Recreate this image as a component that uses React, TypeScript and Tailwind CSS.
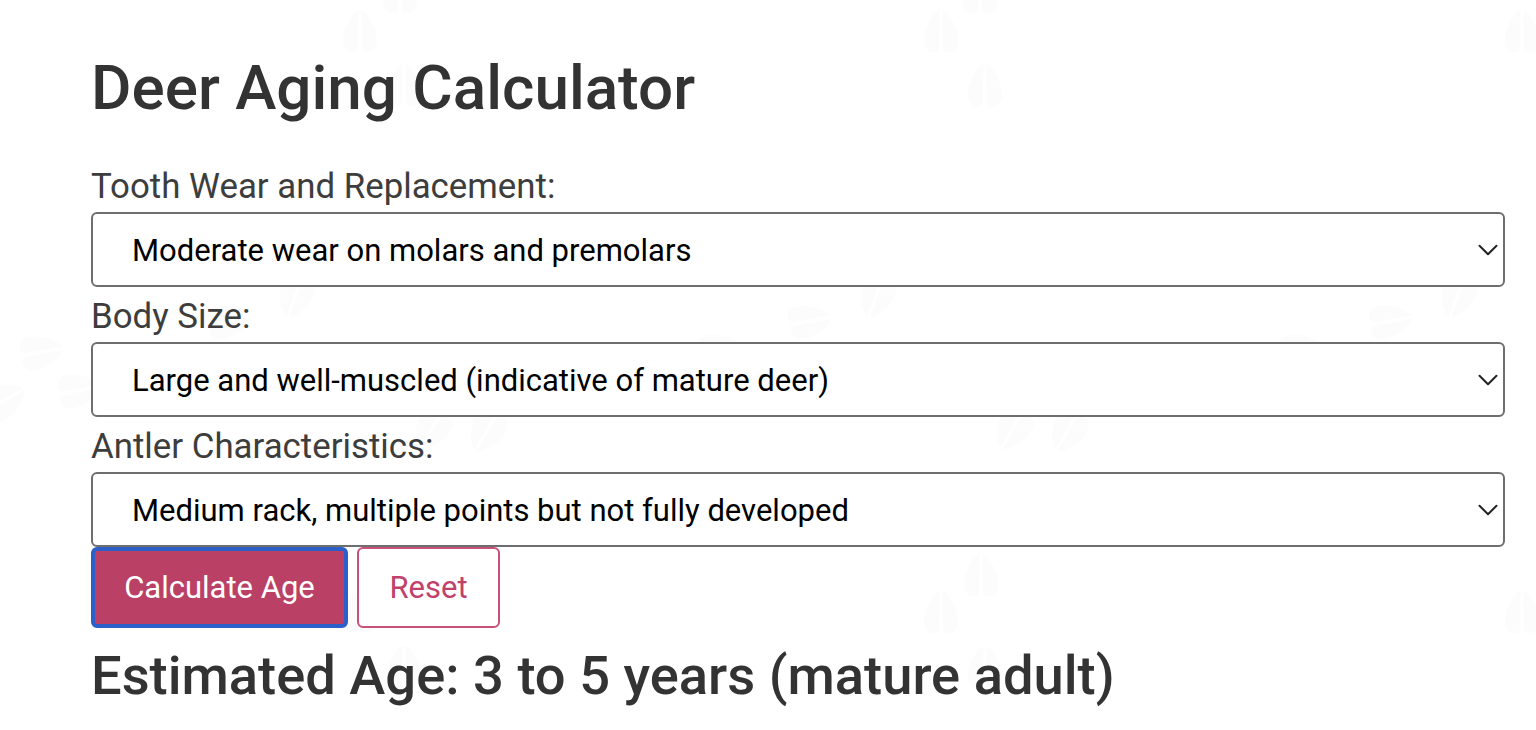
import { ChevronDown } from "lucide-react";

const hoofPrints = [
  { x: 941, y: 31, r: 0 },
  { x: 985, y: 85, r: 0 },
  { x: 980, y: -8, r: 0 },
  { x: 1522, y: 31, r: 0 },
  { x: 400, y: -8, r: 0 },
  { x: 360, y: 31, r: 0 },
  { x: 404, y: 85, r: 0 },
  { x: 941, y: 612, r: 0 },
  { x: 981, y: 575, r: 0 },
  { x: 985, y: 667, r: 0 },
  { x: 1522, y: 612, r: 0 },
  { x: 360, y: 612, r: 0 },
  { x: 400, y: 575, r: 0 },
  { x: 404, y: 667, r: 0 },
  { x: 42, y: 352, r: 80 },
  { x: 80, y: 390, r: 80 },
  { x: 5, y: 400, r: 60 },
  { x: 810, y: 321, r: 80 },
  { x: 720, y: 350, r: 80 },
  { x: 1391, y: 321, r: 80 },
  { x: 1301, y: 350, r: 80 },
  { x: 229, y: 321, r: 80 },
  { x: 876, y: 297, r: 200 },
  { x: 1457, y: 297, r: 200 },
  { x: 295, y: 297, r: 200 },
  { x: 1012, y: 430, r: 210 },
  { x: 1067, y: 432, r: 210 },
  { x: 431, y: 430, r: 210 },
  { x: 486, y: 432, r: 210 },
];

const fields = [
  { label: "Tooth Wear and Replacement:", value: "Moderate wear on molars and premolars" },
  { label: "Body Size:", value: "Large and well-muscled (indicative of mature deer)" },
  { label: "Antler Characteristics:", value: "Medium rack, multiple points but not fully developed" },
];

const App = () => {
  return (
    <div className="relative h-[730px] overflow-hidden bg-white font-['Roboto',sans-serif] text-[#333]">
      {/* faint hoof prints behind the form */}
      <svg className="absolute inset-0" width="1536" height="730" fill="#fcfcfc">
        {hoofPrints.map((h, i) => (
          <g key={i} transform={`translate(${h.x} ${h.y}) rotate(${h.r})`}>
            <path d="M-1.5 -21 C-8 -18 -17 -4 -17 10 C-17 18 -12 21 -7 21 C-3 21 -2 19 -2 14 Z" />
            <path d="M1.5 -21 C8 -18 17 -4 17 10 C17 18 12 21 7 21 C3 21 2 19 2 14 Z" />
          </g>
        ))}
      </svg>

      <div className="relative flex flex-col pl-[91px] pr-[31px] pt-[50px]">
        <h1 className="text-[62px] leading-[76px] font-medium">Deer Aging Calculator</h1>

        <div className="mt-[31px] flex flex-col">
          {fields.map((f) => (
            <div key={f.label} className="flex flex-col pt-[5px]">
              <label className="text-[34.85px] leading-[50px] font-normal text-[#3d3d3d]">{f.label}</label>
              <div className="relative">
                <select
                  defaultValue={f.value}
                  className="h-[75px] w-full appearance-none rounded-md border-2 border-[#6e6e6e] bg-white pl-[39px] pt-[4px] text-[31px] text-black outline-none"
                >
                  <option>{f.value}</option>
                </select>
                <ChevronDown
                  size={34}
                  strokeWidth={1.4}
                  className="pointer-events-none absolute right-0 top-[21px] text-[#222]"
                />
              </div>
            </div>
          ))}
        </div>

        <div className="flex gap-[9px]">
          <button
            type="button"
            className="h-[81px] w-[257px] rounded-md border-4 border-[#2d5fc9] bg-[#bb4065] pt-[2px] text-[31px] text-white"
          >
            Calculate Age
          </button>
          <button
            type="button"
            className="h-[81px] w-[143px] rounded-md border-2 border-[#c9507a] bg-white pt-[2px] text-[31px] text-[#c2416b]"
          >
            Reset
          </button>
        </div>

        <h2 className="mt-[10px] text-[54.3px] leading-[76px] font-medium">Estimated Age: 3 to 5 years (mature adult)</h2>
      </div>
    </div>
  );
};

export default App;
